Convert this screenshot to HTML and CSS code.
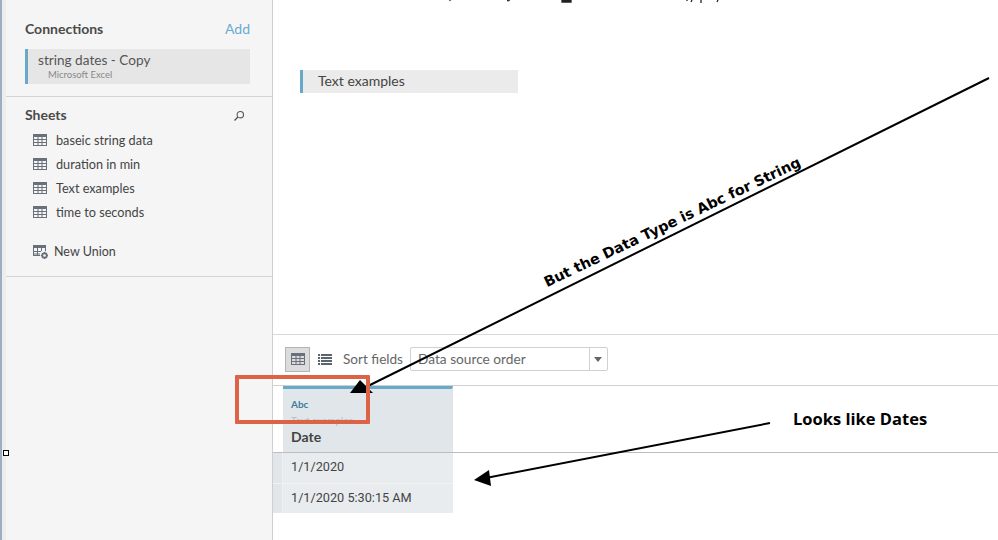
FILE: index.html
```html
<!DOCTYPE html>
<html lang="en">
<head>
<meta charset="utf-8">
<title>Text examples</title>
<link rel="stylesheet" href="styles.css">
</head>
<body>
<div class="app">
  <div class="strip"></div>
  <aside class="sidebar">
    <section class="connections">
      <div class="head"><h2>Connections</h2><a class="add">Add</a></div>
      <div class="conn">
        <div class="conn-name">string dates - Copy</div>
        <div class="conn-type">Microsoft Excel</div>
      </div>
    </section>
    <section class="sheets">
      <div class="head"><h2>Sheets</h2>
        <svg class="search" width="12" height="12" viewBox="0 0 12 12"><circle cx="7.3" cy="4.7" r="3.2" fill="none" stroke="#555" stroke-width="1.1"/><path d="M4.9 7.1 1.5 10.5" stroke="#555" stroke-width="1.4"/></svg>
      </div>
      <ul class="list">
        <li><svg class="ti" width="14" height="12" viewBox="0 0 14 12"><use href="#grid"/></svg>baseic string data</li>
        <li><svg class="ti" width="14" height="12" viewBox="0 0 14 12"><use href="#grid"/></svg>duration in min</li>
        <li><svg class="ti" width="14" height="12" viewBox="0 0 14 12"><use href="#grid"/></svg>Text examples</li>
        <li><svg class="ti" width="14" height="12" viewBox="0 0 14 12"><use href="#grid"/></svg>time to seconds</li>
      </ul>
      <div class="union"><svg width="16" height="15" viewBox="0 0 16 15"><rect x=".5" y=".5" width="12" height="10" fill="none" stroke="#68707c"/><rect x="0" y="0" width="13" height="3" fill="#68707c"/><path d="M4.500 3v8M8.500 3v3M0 6.500h8M0 9h7" stroke="#68707c"/><circle cx="11.500" cy="10.500" r="4.300" fill="#f5f5f5"/><circle cx="11.500" cy="10.500" r="2.400" fill="none" stroke="#68707c" stroke-width="1.600"/><path d="M11.500 7v7M8 10.500h7M9 8l5 5M14 8l-5 5" stroke="#68707c" stroke-width="1"/><circle cx="11.500" cy="10.500" r="1.300" fill="#f5f5f5"/></svg><span>New Union</span></div>
    </section>
  </aside>
  <main class="main">
    <div class="canvas">
      <div class="table-pill">Text examples</div>
    </div>
    <div class="toolbar">
      <button class="vbtn"><svg width="14" height="12" viewBox="0 0 14 12"><use href="#grid"/></svg></button>
      <svg class="listic" width="14" height="11" viewBox="0 0 14 11"><path d="M0 1h2M3 1h11M0 4h2M3 4h11M0 7h2M3 7h11M0 10h2M3 10h11" stroke="#5c6470" stroke-width="2"/></svg>
      <span class="sort-label">Sort fields</span>
      <div class="select"><span class="sel-text">Data source order</span><span class="sel-arrow"></span></div>
    </div>
    <div class="grid">
      <div class="gutter-row head-row"><div class="col hdr">
        <div class="type">Abc</div>
        <div class="src">Text examples</div>
        <div class="fname">Date</div>
      </div></div>
      <div class="row"><div class="gut"></div><div class="cell">1/1/2020</div></div>
      <div class="row row-next"><div class="gut"></div><div class="cell">1/1/2020 5:30:15 AM</div></div>
    </div>
  </main>
</div>

<div class="note-box"></div>
<span class="handle"></span>
<span class="note note-date">Looks like Dates</span>
<span class="note note-type">But the Data Type is Abc for String</span>

<svg class="overlay" width="998" height="540" viewBox="0 0 998 540">
  <path d="M450 0v1M508 0v1.500M510 0h-3M562 0h9v2h-9zM687 0v1M692 0l-1 2M701 0v3M718 0l-1 2" stroke="#222" fill="#222" stroke-width="1.300"/>
  <path d="M989 78 366 387" stroke="#000" stroke-width="2" fill="none"/>
  <path d="M350 393 360 380 373 393z" fill="#000"/>
  <path d="M770 423 486 478" stroke="#000" stroke-width="2" fill="none"/>
  <path d="M474 480 489 470 491 486z" fill="#000"/>
</svg>

<svg width="0" height="0" class="defs">
  <defs>
    <g id="grid">
      <rect x=".5" y=".5" width="13" height="11" fill="none" stroke="#68707c"/>
      <rect x="0" y="0" width="14" height="3" fill="#68707c"/>
      <path d="M5 3v8M9 3v8M1 5.500h12M1 8.500h12" stroke="#68707c"/>
    </g>
  </defs>
</svg>
</body>
</html>
```
FILE: styles.css
```css
* { box-sizing: border-box; }
html, body { margin: 0; padding: 0; height: 100%; overflow: hidden; background: #fff; }
body { font-family: Lato, "Open Sans", sans-serif; color: #3f3f3f; font-size: 12.700px; }
.app { display: flex; height: 540px; width: 998px; }
.strip { width: 6px; background: #ededed; border-left: 2px solid #9fadc0; }
.sidebar { width: 267px; background: #f5f5f5; border-right: 1px solid #cfcfcf; }
.connections { height: 97px; padding: 18px 22px 0 19px; border-bottom: 1px solid #d4d4d4; }
.head { display: flex; justify-content: space-between; align-items: center; height: 20px; }
h2 { margin: 0; font-size: 14px; font-weight: 700; color: #4a4a4a; }
.add { color: #66acd2; font-size: 14px; margin-top: 1px; }
.conn { margin-top: 11px; height: 35px; background: #e6e6e6; border-left: 3px solid #68a8c9; padding: 3px 0 0 10px; }
.conn-name { font-size: 13.600px; line-height: 17px; color: #555; }
.conn-type { font-size: 9.500px; line-height: 12px; margin-left: 10px; color: #888; }
.sheets { height: 180px; border-bottom: 1px solid #d4d4d4; padding: 7px 27px 0 19px; }
.search { margin-top: 4px; }
.list { list-style: none; margin: 4px 0 0; padding: 0 0 0 8px; }
.list li { display: flex; align-items: center; height: 24px; gap: 9px; color: #444; }
.union { display: flex; align-items: center; gap: 5px; margin: 16px 0 0 8px; height: 24px; color: #444; }
.union span { margin-top: -1px; font-size: 12.500px; }
.main { flex: 1; display: flex; flex-direction: column; min-width: 0; }
.canvas { height: 335px; border-bottom: 1px solid #d9d9d9; padding: 70px 0 0 27px; }
.table-pill { width: 218px; height: 23px; line-height: 22px; background: #ebebeb; border-left: 3px solid #68a8c9; padding-left: 15px; font-size: 14px; color: #444; }
.toolbar { height: 51px; display: flex; align-items: center; padding: 0 0 2px 12px; border-bottom: 1px solid #d0d0d0; }
.vbtn { width: 25px; height: 25px; padding: 0; display: flex; align-items: center; justify-content: center; background: #dcdcdc; border: 1px solid #b4b4b4; }
.listic { margin-left: 8px; }
.sort-label { margin-left: 11px; font-size: 13.600px; color: #666; }
.select { margin-left: 7px; width: 198px; height: 24px; display: flex; background: #fff; border: 1px solid #d0d0d0; border-radius: 2px; }
.sel-text { flex: 1; padding-left: 7px; font-size: 13.700px; line-height: 22px; color: #666; border-right: 1px solid #d0d0d0; }
.sel-arrow { width: 17px; position: relative; }
.sel-arrow::after { content: ""; position: absolute; left: 4px; top: 9px; border: 4px solid transparent; border-top: 5px solid #666; border-bottom: 0; }
.grid { display: flex; flex-direction: column; }
.head-row { height: 67px; padding-left: 10px; border-bottom: 1px solid #bdbdbd; }
.col { width: 170px; }
.hdr { height: 66px; background: #e1e6ea; border-top: 3px solid #68a8c9; padding: 9px 0 0 8px; border-right: 1px solid #dfe3e6; }
.type { font-size: 10px; line-height: 12px; color: #3a7d9c; font-weight: 700; }
.src { font-size: 10px; line-height: 12px; margin-top: 4px; color: #bbb; }
.fname { font-size: 14px; font-weight: 700; line-height: 17px; margin-top: 2px; color: #444; }
.row { display: flex; height: 30px; }
.row-next .gut, .row-next .cell { border-top: 1px solid #f0f2f4; }
.gut { width: 10px; background: #e1e6ea; border-right: 1px solid #eef0f2; }
.cell { width: 170px; background: #e8ecef; padding-left: 8px; line-height: 28px; color: #444; font-family: Roboto, sans-serif; font-size: 12.700px; }
.note-box { position: absolute; left: 235px; top: 375px; width: 135px; height: 49px; border: 4px solid #dd6347; border-radius: 1px; z-index: 3; }
.handle { position: absolute; left: 3px; top: 450px; width: 6px; height: 6px; background: #fff; border: 1px solid #000; z-index: 3; }
.note { position: absolute; font-family: "DejaVu Sans", sans-serif; font-weight: 700; color: #000; font-size: 14px; white-space: nowrap; z-index: 3; }
.note-date { left: 793px; top: 407px; font-size: 16.500px; font-family: "Open Sans", sans-serif; }
.note-type { left: 531px; top: 214px; transform: rotate(-25.500deg); font-size: 14.400px; }
.overlay { position: absolute; left: 0; top: 0; z-index: 2; pointer-events: none; }
.defs { position: absolute; }
```
